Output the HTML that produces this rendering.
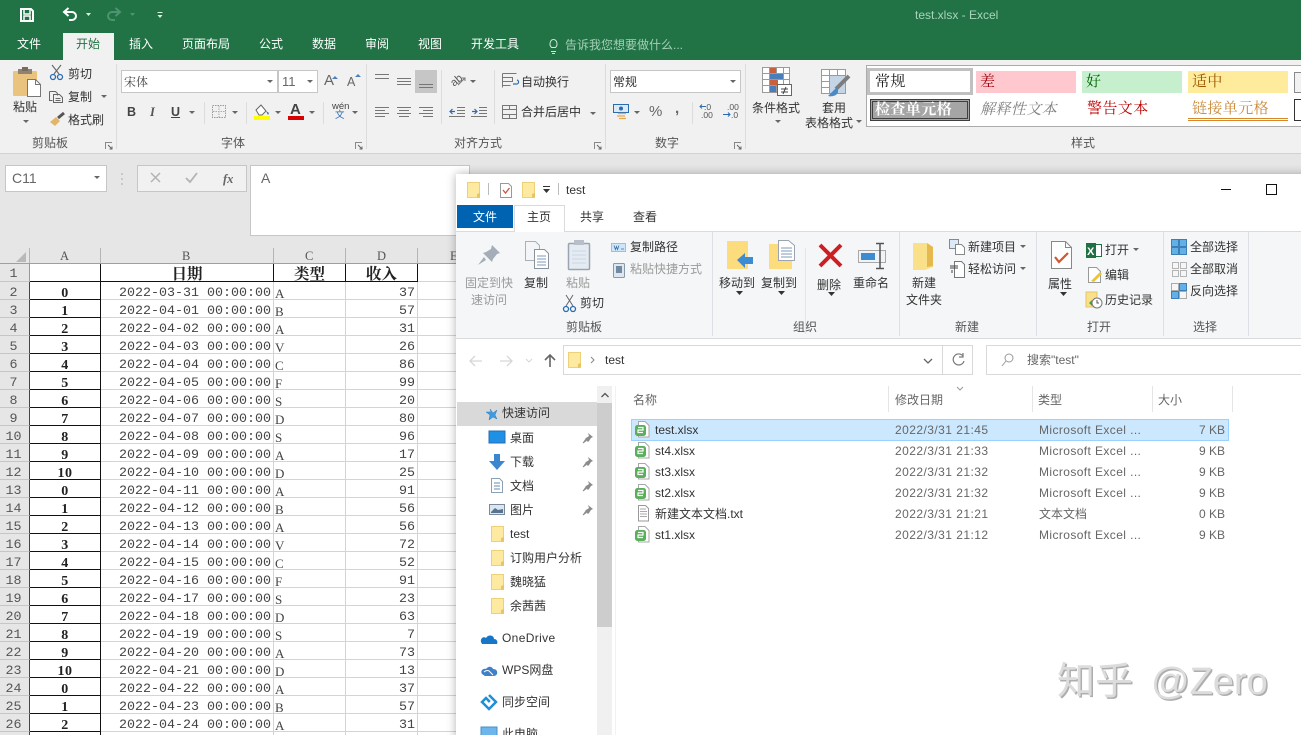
<!DOCTYPE html>
<html lang="zh-CN"><head><meta charset="utf-8"><title>test.xlsx - Excel</title>
<style>
html,body{margin:0;padding:0;width:1301px;height:735px;overflow:hidden}
body{position:relative;background:#e6e6e6;font-family:"Liberation Sans","Noto Sans CJK SC",sans-serif;font-size:12px;color:#444}
span{position:absolute;white-space:nowrap;line-height:16px}
div,main{position:absolute;box-sizing:border-box}
main{left:0;top:0;width:1301px;height:735px;overflow:hidden;background:#e6e6e6}
.w{color:#fff}.g{color:#555}.m{color:#9a9a9a}.d{color:#666}.k{color:#333}
.dt{letter-spacing:.45px}.ty{letter-spacing:.4px}
.st{font-family:"Liberation Serif","Noto Serif CJK SC",serif;font-size:15px;letter-spacing:.4px;line-height:20px}
table{position:absolute;left:0;top:264px;border-spacing:0;table-layout:fixed;width:470px;font:13.33px/10px "Liberation Mono","Noto Sans CJK SC",monospace;color:#444}
td{height:18px;padding:7px 0 0 0;box-sizing:border-box;border-right:1px solid #d4d4d4;border-bottom:1px solid #d4d4d4;background:#fff;white-space:nowrap;overflow:hidden}
td:nth-child(1){background:#e6e6e6;border-right:1px solid #444;border-bottom-color:#c6c6c6;text-align:center;padding-right:2px;color:#555}
td:nth-child(2){border-right-color:#111;border-bottom-color:#111;text-align:center;font:bold 14px/10px "Liberation Serif",serif;color:#222;letter-spacing:.5px}
td:nth-child(3){text-align:right;padding-right:2px}
td:nth-child(4){padding-left:1px;font-family:"Liberation Serif",serif;font-size:13px}
td:nth-child(5){text-align:right;padding-right:2px}
.h td{border-bottom-color:#111;border-right-color:#111;font:bold 15.5px/12px "Liberation Serif","Noto Serif CJK SC",serif;color:#222;text-align:center;padding:5px 0 0 0}
.h td:nth-child(1){font:13.33px/12px "Liberation Mono",monospace;border-bottom-color:#c6c6c6;border-right-color:#999;color:#555;padding-right:2px}
.h td:nth-child(6){border-color:#d4d4d4}
.ch{font:12.5px/14px "Liberation Serif",serif;color:#555}
</style></head><body><main>

<!-- Excel chrome -->
<div style="left:0;top:0;width:1301px;height:60px;background:#217346"></div>
<div style="left:63px;top:33px;width:51px;height:27px;background:#f1f1f1"></div>
<span class="w" style="left:17px;top:36px">文件</span>
<span style="left:76px;top:36px;color:#217346">开始</span>
<span class="w" style="left:129px;top:36px">插入</span>
<span class="w" style="left:182px;top:36px">页面布局</span>
<span class="w" style="left:259px;top:36px">公式</span>
<span class="w" style="left:312px;top:36px">数据</span>
<span class="w" style="left:365px;top:36px">审阅</span>
<span class="w" style="left:418px;top:36px">视图</span>
<span class="w" style="left:471px;top:36px">开发工具</span>
<span style="left:565px;top:37px;color:#a5cfb6">告诉我您想要做什么...</span>
<span style="left:915px;top:7px;color:#a9d4ba">test.xlsx - Excel</span>

<div style="left:0;top:60px;width:1301px;height:94px;background:#f1f1f1;border-bottom:1px solid #d2d2d2"></div>
<div style="left:121px;top:70px;width:157px;height:23px;background:#fff;border:1px solid #c6c6c6"></div>
<div style="left:278px;top:70px;width:40px;height:23px;background:#fff;border:1px solid #c6c6c6"></div>
<div style="left:610px;top:70px;width:131px;height:23px;background:#fff;border:1px solid #c6c6c6"></div>
<div style="left:415px;top:70px;width:22px;height:23px;background:#c6c6c6"></div>

<span style="left:124px;top:74px;font-family:'Noto Serif CJK SC',serif">宋体</span>
<span class="d" style="left:282px;top:74px;font-size:13px">11</span>
<span class="d" style="left:324px;top:73px;font-size:15px">A</span>
<span class="d" style="left:347px;top:74px;font-size:12.5px">A</span>
<span class="k" style="left:68px;top:66px">剪切</span>
<span class="k" style="left:68px;top:89px">复制</span>
<span class="k" style="left:68px;top:112px">格式刷</span>
<span class="k" style="left:13px;top:99px">粘贴</span>
<span class="g" style="left:32px;top:135px">剪贴板</span>
<span class="g" style="left:221px;top:135px">字体</span>
<span class="g" style="left:454px;top:135px">对齐方式</span>
<span class="g" style="left:655px;top:135px">数字</span>
<span class="g" style="left:1071px;top:135px">样式</span>
<span style="left:127px;top:104px;font-weight:bold;font-size:12.5px">B</span>
<span style="left:150px;top:104px;font:italic bold 12.5px/16px 'Liberation Serif',serif;color:#555">I</span>
<span style="left:171px;top:104px;font-weight:bold;font-size:12.5px;text-decoration:underline">U</span>
<span style="left:290px;top:102px;font-weight:bold;font-size:15px;line-height:15px">A</span>
<span style="left:332px;top:101px;font-size:9.5px;line-height:11px">wén</span>
<span style="left:335px;top:110px;font-size:9.5px;line-height:11px;color:#2b6cb0">文</span>
<span class="k" style="left:521px;top:74px">自动换行</span>
<span class="k" style="left:521px;top:104px">合并后居中</span>
<span class="k" style="left:613px;top:74px">常规</span>
<span class="d" style="left:649px;top:104px;font-size:15px">%</span>
<span class="d" style="left:675px;top:101px;font-size:15px;font-weight:bold">,</span>
<span class="k" style="left:752px;top:100px">条件格式</span>
<span class="k" style="left:822px;top:100px">套用</span>
<span class="k" style="left:805px;top:115px">表格格式</span>

<!-- style gallery -->
<div style="left:866px;top:65px;width:440px;height:62px;background:#fff;border:1px solid #ababab"></div>
<div style="left:867px;top:68px;width:106px;height:27px;background:#fff;border:3px solid #c0c0c0"></div>
<div style="left:976px;top:71px;width:100px;height:22px;background:#ffc7ce"></div>
<div style="left:1082px;top:71px;width:100px;height:22px;background:#c6efce"></div>
<div style="left:1188px;top:71px;width:100px;height:22px;background:#ffeb9c"></div>
<div style="left:1294px;top:72px;width:12px;height:21px;background:#f2f2f2;border:1px solid #8a8a8a"></div>
<div style="left:870px;top:99px;width:100px;height:22px;background:#a5a5a5;border:3px double #3f3f3f"></div>
<div style="left:1294px;top:99px;width:12px;height:22px;background:#fff;border:1px solid #333"></div>
<div style="left:1188px;top:118px;width:100px;height:3px;border-top:1px solid #d48a2c;border-bottom:1px solid #d48a2c"></div>
<span class="st" style="left:875px;top:72px;color:#111">常规</span>
<span class="st" style="left:980px;top:72px;color:#9c0006">差</span>
<span class="st" style="left:1086px;top:72px;color:#006100">好</span>
<span class="st" style="left:1192px;top:72px;color:#9c5700">适中</span>
<span class="st" style="left:875px;top:100px;color:#fff;font-weight:bold">检查单元格</span>
<span class="st" style="left:980px;top:100px;color:#7f7f7f;font-style:italic">解释性文本</span>
<span class="st" style="left:1087px;top:99px;color:#c00000">警告文本</span>
<span class="st" style="left:1192px;top:99px;color:#c98a3a">链接单元格</span>

<!-- formula bar -->
<div style="left:5px;top:165px;width:102px;height:27px;background:#fff;border:1px solid #c6c6c6"></div>
<span class="d" style="left:12px;top:170px;font-size:14px">C11</span>
<div style="left:137px;top:165px;width:110px;height:27px;background:#f1f1f1;border:1px solid #c6c6c6"></div>
<span style="left:223px;top:171px;font:italic bold 12.5px/16px 'Liberation Serif',serif;color:#666">fx</span>
<div style="left:250px;top:165px;width:220px;height:71px;background:#fff;border:1px solid #c6c6c6"></div>
<span class="d" style="left:261px;top:170px;font-size:14px">A</span>

<!-- sheet -->
<div style="left:0;top:263px;width:470px;height:1px;background:#9f9f9f"></div>
<div style="left:29px;top:248px;width:1px;height:15px;background:#b5b5b5"></div>
<div style="left:100px;top:248px;width:1px;height:15px;background:#b5b5b5"></div>
<div style="left:273px;top:248px;width:1px;height:15px;background:#b5b5b5"></div>
<div style="left:345px;top:248px;width:1px;height:15px;background:#b5b5b5"></div>
<div style="left:417px;top:248px;width:1px;height:15px;background:#b5b5b5"></div>
<span class="ch" style="left:60px;top:249px">A</span>
<span class="ch" style="left:182px;top:249px">B</span>
<span class="ch" style="left:305px;top:249px">C</span>
<span class="ch" style="left:377px;top:249px">D</span>
<span class="ch" style="left:450px;top:249px">E</span>
<table><colgroup><col style="width:30px"><col style="width:71px"><col style="width:173px"><col style="width:72px"><col style="width:72px"><col style="width:52px"></colgroup>
<tr class="h"><td>1</td><td></td><td>日期</td><td>类型</td><td>收入</td><td></td></tr>
<tr><td>2</td><td>0</td><td>2022-03-31 00:00:00</td><td>A</td><td>37</td><td></td></tr>
<tr><td>3</td><td>1</td><td>2022-04-01 00:00:00</td><td>B</td><td>57</td><td></td></tr>
<tr><td>4</td><td>2</td><td>2022-04-02 00:00:00</td><td>A</td><td>31</td><td></td></tr>
<tr><td>5</td><td>3</td><td>2022-04-03 00:00:00</td><td>V</td><td>26</td><td></td></tr>
<tr><td>6</td><td>4</td><td>2022-04-04 00:00:00</td><td>C</td><td>86</td><td></td></tr>
<tr><td>7</td><td>5</td><td>2022-04-05 00:00:00</td><td>F</td><td>99</td><td></td></tr>
<tr><td>8</td><td>6</td><td>2022-04-06 00:00:00</td><td>S</td><td>20</td><td></td></tr>
<tr><td>9</td><td>7</td><td>2022-04-07 00:00:00</td><td>D</td><td>80</td><td></td></tr>
<tr><td>10</td><td>8</td><td>2022-04-08 00:00:00</td><td>S</td><td>96</td><td></td></tr>
<tr><td>11</td><td>9</td><td>2022-04-09 00:00:00</td><td>A</td><td>17</td><td></td></tr>
<tr><td>12</td><td>10</td><td>2022-04-10 00:00:00</td><td>D</td><td>25</td><td></td></tr>
<tr><td>13</td><td>0</td><td>2022-04-11 00:00:00</td><td>A</td><td>91</td><td></td></tr>
<tr><td>14</td><td>1</td><td>2022-04-12 00:00:00</td><td>B</td><td>56</td><td></td></tr>
<tr><td>15</td><td>2</td><td>2022-04-13 00:00:00</td><td>A</td><td>56</td><td></td></tr>
<tr><td>16</td><td>3</td><td>2022-04-14 00:00:00</td><td>V</td><td>72</td><td></td></tr>
<tr><td>17</td><td>4</td><td>2022-04-15 00:00:00</td><td>C</td><td>52</td><td></td></tr>
<tr><td>18</td><td>5</td><td>2022-04-16 00:00:00</td><td>F</td><td>91</td><td></td></tr>
<tr><td>19</td><td>6</td><td>2022-04-17 00:00:00</td><td>S</td><td>23</td><td></td></tr>
<tr><td>20</td><td>7</td><td>2022-04-18 00:00:00</td><td>D</td><td>63</td><td></td></tr>
<tr><td>21</td><td>8</td><td>2022-04-19 00:00:00</td><td>S</td><td>7</td><td></td></tr>
<tr><td>22</td><td>9</td><td>2022-04-20 00:00:00</td><td>A</td><td>73</td><td></td></tr>
<tr><td>23</td><td>10</td><td>2022-04-21 00:00:00</td><td>D</td><td>13</td><td></td></tr>
<tr><td>24</td><td>0</td><td>2022-04-22 00:00:00</td><td>A</td><td>37</td><td></td></tr>
<tr><td>25</td><td>1</td><td>2022-04-23 00:00:00</td><td>B</td><td>57</td><td></td></tr>
<tr><td>26</td><td>2</td><td>2022-04-24 00:00:00</td><td>A</td><td>31</td><td></td></tr>
<tr><td></td><td></td><td></td><td></td><td></td><td></td></tr>
</table>

<!-- Explorer window -->
<div style="left:456px;top:174px;width:860px;height:580px;background:#fff;box-shadow:0 0 9px rgba(0,0,0,.3)"></div>
<div style="left:456px;top:231px;width:845px;height:108px;background:#f5f6f7;border-top:1px solid #dadbdc;border-bottom:1px solid #dadbdc"></div>
<div style="left:457px;top:205px;width:56px;height:23px;background:#0063b1"></div>
<div style="left:514px;top:205px;width:51px;height:27px;background:#fff;border:1px solid #dadbdc;border-bottom:0"></div>
<span class="k" style="left:566px;top:182px">test</span>
<span class="w" style="left:473px;top:209px">文件</span>
<span class="k" style="left:527px;top:209px">主页</span>
<span class="k" style="left:580px;top:209px">共享</span>
<span class="k" style="left:633px;top:209px">查看</span>

<!-- address -->
<div style="left:563px;top:345px;width:410px;height:30px;border:1px solid #d9d9d9;background:#fff"></div>
<div style="left:942px;top:345px;width:1px;height:30px;background:#d9d9d9"></div>
<div style="left:986px;top:345px;width:330px;height:30px;border:1px solid #d9d9d9;background:#fff"></div>
<span class="k" style="left:605px;top:352px">test</span>
<span class="d" style="left:1027px;top:352px">搜索"test"</span>

<!-- nav pane & list backgrounds -->
<div style="left:457px;top:402px;width:140px;height:24px;background:#d9d9d9"></div>
<div style="left:597px;top:386px;width:15px;height:349px;background:#f0f0f0"></div>
<div style="left:597px;top:403px;width:15px;height:224px;background:#cdcdcd"></div>
<div style="left:615px;top:386px;width:1px;height:349px;background:#f2f2f2"></div>
<div style="left:888px;top:386px;width:1px;height:26px;background:#e5e5e5"></div>
<div style="left:1032px;top:386px;width:1px;height:26px;background:#e5e5e5"></div>
<div style="left:1152px;top:386px;width:1px;height:26px;background:#e5e5e5"></div>
<div style="left:1232px;top:386px;width:1px;height:26px;background:#e5e5e5"></div>
<div style="left:631px;top:419px;width:598px;height:22px;background:#cce8ff;border:1px solid #99d1ff"></div>

<!-- text group shifted by 1px -->
<div style="left:0;top:1px;width:1301px;height:1px">
<span class="m" style="left:465px;top:274px">固定到快</span>
<span class="m" style="left:471px;top:291px">速访问</span>
<span class="k" style="left:524px;top:274px">复制</span>
<span class="m" style="left:566px;top:274px">粘贴</span>
<span class="k" style="left:630px;top:238px">复制路径</span>
<span class="m" style="left:630px;top:260px">粘贴快捷方式</span>
<span class="k" style="left:580px;top:294px">剪切</span>
<span class="g" style="left:566px;top:318px">剪贴板</span>
<span class="k" style="left:719px;top:274px">移动到</span>
<span class="k" style="left:761px;top:274px">复制到</span>
<span class="k" style="left:817px;top:276px">删除</span>
<span class="k" style="left:853px;top:274px">重命名</span>
<span class="g" style="left:793px;top:318px">组织</span>
<span class="k" style="left:912px;top:274px">新建</span>
<span class="k" style="left:906px;top:291px">文件夹</span>
<span class="k" style="left:968px;top:238px">新建项目</span>
<span class="k" style="left:968px;top:260px">轻松访问</span>
<span class="g" style="left:955px;top:318px">新建</span>
<span class="k" style="left:1048px;top:275px">属性</span>
<span class="k" style="left:1105px;top:241px">打开</span>
<span class="k" style="left:1105px;top:266px">编辑</span>
<span class="k" style="left:1105px;top:291px">历史记录</span>
<span class="g" style="left:1087px;top:318px">打开</span>
<span class="k" style="left:1190px;top:238px">全部选择</span>
<span class="k" style="left:1190px;top:260px">全部取消</span>
<span class="k" style="left:1190px;top:282px">反向选择</span>
<span class="g" style="left:1193px;top:318px">选择</span>

<span class="k" style="left:502px;top:404px">快速访问</span>
<span class="k" style="left:510px;top:429px">桌面</span>
<span class="k" style="left:510px;top:453px">下载</span>
<span class="k" style="left:510px;top:477px">文档</span>
<span class="k" style="left:510px;top:501px">图片</span>
<span class="k" style="left:510px;top:525px">test</span>
<span class="k" style="left:510px;top:549px">订购用户分析</span>
<span class="k" style="left:510px;top:573px">魏晓猛</span>
<span class="k" style="left:510px;top:597px">余茜茜</span>
<span class="k" style="left:502px;top:629px;letter-spacing:.35px">OneDrive</span>
<span class="k" style="left:502px;top:661px">WPS网盘</span>
<span class="k" style="left:502px;top:693px">同步空间</span>
<span class="k" style="left:502px;top:725px">此电脑</span>

<span class="d" style="left:633px;top:391px">名称</span>
<span class="d" style="left:895px;top:391px">修改日期</span>
<span class="d" style="left:1038px;top:391px">类型</span>
<span class="d" style="left:1158px;top:391px">大小</span>

<span class="k" style="left:655px;top:421px">test.xlsx</span><span class="d dt" style="left:895px;top:421px">2022/3/31 21:45</span><span class="d ty" style="left:1039px;top:421px">Microsoft Excel ...</span><span class="d" style="right:76px;top:421px">7 KB</span>
<span class="k" style="left:655px;top:442px">st4.xlsx</span><span class="d dt" style="left:895px;top:442px">2022/3/31 21:33</span><span class="d ty" style="left:1039px;top:442px">Microsoft Excel ...</span><span class="d" style="right:76px;top:442px">9 KB</span>
<span class="k" style="left:655px;top:463px">st3.xlsx</span><span class="d dt" style="left:895px;top:463px">2022/3/31 21:32</span><span class="d ty" style="left:1039px;top:463px">Microsoft Excel ...</span><span class="d" style="right:76px;top:463px">9 KB</span>
<span class="k" style="left:655px;top:484px">st2.xlsx</span><span class="d dt" style="left:895px;top:484px">2022/3/31 21:32</span><span class="d ty" style="left:1039px;top:484px">Microsoft Excel ...</span><span class="d" style="right:76px;top:484px">9 KB</span>
<span class="k" style="left:655px;top:505px">新建文本文档.txt</span><span class="d dt" style="left:895px;top:505px">2022/3/31 21:21</span><span class="d" style="left:1039px;top:505px">文本文档</span><span class="d" style="right:76px;top:505px">0 KB</span>
<span class="k" style="left:655px;top:526px">st1.xlsx</span><span class="d dt" style="left:895px;top:526px">2022/3/31 21:12</span><span class="d ty" style="left:1039px;top:526px">Microsoft Excel ...</span><span class="d" style="right:76px;top:526px">9 KB</span>
</div>

<!-- icons -->
<svg width="1301" height="735" viewBox="0 0 1301 735" style="position:absolute;left:0;top:0" fill="none">
<defs>
<path id="c" d="M0 0h6l-3 3z" fill="#666"/>
<path id="cw" d="M0 0h5l-2.500 3z" fill="#dfeee5"/>
<path id="cb" d="M0 0h7l-3.500 4z" fill="#333"/>
<g id="la" stroke="#888"><path d="M.5 7V.5H7"/><path d="M3 3l4 4M7 4.500V7H4.500" stroke="#666"/></g>
<g id="fo"><rect x=".5" y=".5" width="12" height="15" fill="#fde9a0" stroke="#ecd07a"/><path d="M10 16V12l3-1v4z" fill="#e9c55f"/></g>
<g id="xl"><path d="M3.500.5h6.500l4 4v11.500h-10.500z" fill="#fff" stroke="#a8a8a8"/><rect y="4" width="11" height="11" rx="2.500" fill="#5bae5b"/><path d="M3 6.500h5v2.500h-5v2.500h5" stroke="#fff" stroke-width="1.200"/></g>
<g id="pn" fill="#8c8c8c"><path d="M5 0l5 4-2 1-2 3-1 1-3-3 1-1 3-2z"/><path d="M2.500 6.500l-2.500 3.500 3.500-2.500" stroke="#8c8c8c" stroke-width=".8"/></g>
</defs>

<!-- QAT -->
<g stroke="#fff" stroke-width="2"><path d="M21 9h10l2 2v10H21z"/><path d="M24 9v5h6V9M24 21v-5h6v5" stroke-width="1.500"/></g>
<path d="M65 12h7a4 4 0 0 1 0 8h-3M68.500 8l-4.500 4 4.500 4" stroke="#fff" stroke-width="2"/>
<use href="#cw" x="86" y="13"/>
<path d="M119 12h-7a4 4 0 0 0 0 8h3M115.500 8l4.500 4-4.500 4" stroke="#4d9470" stroke-width="2"/>
<path d="M130 13h5l-2.500 3z" fill="#4d9470"/>
<path d="M157.500 12.500h5" stroke="#dfeee5"/><use href="#cw" x="157.500" y="15"/>
<g stroke="#cfe6d8"><path d="M551 51.500h5M552 53.500h3M551.500 47.500c-3-3-1-8 2-8s5 5 2 8z"/></g>

<!-- clipboard -->
<rect x="13" y="71" width="24" height="25" rx="1" fill="#eac47f"/>
<rect x="18" y="69" width="14" height="5" fill="#8d8273"/><rect x="22" y="67" width="6" height="4" fill="#7a6b5c"/>
<path d="M27.500 79.500h8l5 5v12h-13z" fill="#fff" stroke="#777"/><path d="M35.500 79.500v5h5" stroke="#777"/>
<use href="#c" x="23" y="120"/>
<g stroke="#666" stroke-width="1.100"><path d="M54 74l7-9M59 74l-7-9"/></g>
<g stroke="#2b6cb0" stroke-width="1.300"><circle cx="53" cy="77" r="2.500"/><circle cx="60" cy="77" r="2.500"/></g>
<g stroke="#666"><path d="M49.500 91.500h6l2 2v2M49.500 91.500v9h3"/><path d="M53.500 94.500h6l3 3v5h-9zM55.500 98.500h5M55.500 100.500h5"/></g>
<use href="#c" x="101" y="95"/>
<path d="M50 122l6-5 4 4-5 5z" fill="#e3b56b"/><path d="M58 118l6-5" stroke="#555" stroke-width="3"/>
<use href="#la" x="105" y="142"/><use href="#la" x="355" y="142"/><use href="#la" x="594" y="142"/><use href="#la" x="734" y="142"/>

<!-- ribbon separators -->
<g stroke="#dcdcdc"><path d="M116.500 64v85M366.500 64v85M605.500 64v85M745.500 64v85"/><path d="M204.500 102v22M246.500 102v22M323.500 102v22M441.500 70v54M494.500 70v54M692.500 102v22"/></g>
<use href="#c" x="267" y="80"/><use href="#c" x="307" y="80"/><use href="#c" x="730" y="80"/><use href="#c" x="94" y="176"/>
<path d="M335 76l3 3h-6zM358 74l3 3h-6z" fill="#4f7fb8"/>
<use href="#c" x="189" y="111"/><use href="#c" x="232" y="111"/><use href="#c" x="275" y="111"/><use href="#c" x="309" y="111"/><use href="#c" x="352" y="111"/>
<rect x="212.500" y="105.500" width="13" height="12" stroke="#999" stroke-dasharray="1.500 1"/><path d="M219 106v12M213 111.500h12" stroke="#aaa" stroke-dasharray="1.500 1"/>
<path d="M256 110l5-5 5 6-4 4h-3z" stroke="#666" fill="#fff"/><path d="M266 111l3 2-1 2z" fill="#2b6cb0"/>
<rect x="254" y="116" width="16" height="4" fill="#ffff00"/>
<rect x="288" y="116" width="16" height="4" fill="#d80000"/>

<!-- alignment -->
<g stroke="#777"><path d="M375 74.500h14M375 78.500h14M397 78.500h14M397 81.500h14M397 84.500h14M419 84.500h14M419 87.500h14"/>
<path d="M375 107.500h14M375 110.500h10M375 113.500h14M375 116.500h10M397 107.500h14M399 110.500h10M397 113.500h14M399 116.500h10M419 107.500h14M423 110.500h10M419 113.500h14M423 116.500h10"/>
<path d="M457 107.500h8M457 110.500h8M457 113.500h8M457 116.500h8M449 116.500h8M479 107.500h8M479 110.500h8M479 113.500h8M479 116.500h8M471 116.500h8"/></g>
<path d="M455 111.500h-5M452.500 109l-2.500 2.500 2.500 2.500M472 111.500h5M474.500 109l2.500 2.500-2.500 2.500" stroke="#2b6cb0" stroke-width="1.200"/>
<text x="450" y="84" font-size="11" fill="#555" transform="rotate(-40 456 80)" font-family="Liberation Sans">ab</text><path d="M458 85l7-7M462 78h3v3" stroke="#777"/>
<use href="#c" x="470" y="80"/>
<g stroke="#777"><path d="M502.500 73.500h14M502.500 77.500h10v4h-10zM502.500 85.500h8M502.500 73.500v14"/><rect x="502.500" y="105.500" width="14" height="13"/><path d="M502.500 109.500h14M502.500 114.500h14M509.500 105.500v4M509.500 114.500v4"/></g>
<path d="M513 84h3a2 2 0 0 0 1-4" stroke="#2b6cb0" stroke-width="1.200"/>
<use href="#c" x="590" y="112"/>
<!-- number -->
<rect x="613.500" y="104.500" width="15" height="8" fill="#dce9f6" stroke="#2b6cb0"/><circle cx="621" cy="108.500" r="2" fill="#2b6cb0"/>
<path d="M618 113.500h8M617 116h8M619 118.500h7" stroke="#e6a84a" stroke-width="1.300"/>
<use href="#c" x="634" y="111"/>
<g font-family="Liberation Sans" font-size="8.500" fill="#555"><text x="704" y="110">.0</text><text x="701" y="118">.00</text><text x="727" y="110">.00</text><text x="731" y="118">.0</text></g>
<path d="M706 106.500h-6M702 104.500l-2 2 2 2M723 114.500h7M728 112.500l2 2-2 2" stroke="#2b6cb0"/>
<!-- cond format -->
<g stroke="#9a9a9a"><rect x="762.500" y="67.500" width="27" height="25" fill="#fff"/><path d="M769.500 67v26M776.500 67v26M783.500 67v26M762 73.500h28M762 79.500h28M762 85.500h28"/></g>
<rect x="770" y="68" width="6" height="5" fill="#c8603e"/><rect x="770" y="74" width="13" height="5" fill="#4a7ebb"/><rect x="770" y="80" width="8" height="5" fill="#c8603e"/><rect x="770" y="86" width="6" height="6" fill="#4a7ebb"/>
<rect x="777.500" y="84.500" width="14" height="11" fill="#fff" stroke="#666"/><path d="M781 89h7M781 92h7M786 87l-3 7" stroke="#444"/>
<use href="#c" x="775" y="120"/>
<g stroke="#9a9a9a"><rect x="821.500" y="69.500" width="24" height="24" fill="#fff"/><path d="M829.500 69v25M837.500 69v25M821 75.500h25M821 81.500h25M821 87.500h25"/></g>
<rect x="830" y="76" width="15" height="17" fill="#c5d5e6"/>
<path d="M849 76l-13 13" stroke="#7d7d7d" stroke-width="4"/><path d="M838 86l-7 7-3 3c3 1 9 0 10-4z" fill="#4a8bc6"/>
<use href="#c" x="856" y="120"/>
<!-- formula bar -->
<path d="M122 173v2M122 178v2M122 183v2" stroke="#aaa"/>
<path d="M151 173l9 9M160 173l-9 9" stroke="#b3b3b3" stroke-width="1.500"/>
<path d="M186 178l4 4 7-9" stroke="#b3b3b3" stroke-width="1.800"/>
<path d="M16 262l10-10v10z" fill="#b9b9b9"/>

<!-- explorer title bar -->
<use href="#fo" x="467" y="182"/><use href="#fo" x="522" y="182"/>
<path d="M488.500 183v12M558.500 183v12" stroke="#bbb"/>
<path d="M500.500 183.500h8l3 3v11h-11z" fill="#fff" stroke="#999"/><path d="M503 190l2.500 3 4-5" stroke="#d24a2f" stroke-width="1.200"/>
<path d="M543 186.500h7" stroke="#333"/><use href="#cb" x="543" y="189"/>
<path d="M1221 189.500h10" stroke="#111"/><rect x="1266.500" y="184.500" width="10" height="10" stroke="#111"/>

<!-- explorer ribbon icons -->
<g fill="#a5adb8"><path d="M492 245l8 8-3 1-4 5-1 3-9-9 3-1 5-3z"/><path d="M484 257l-6 8 8-5z"/></g>
<path d="M525.500 241.500h10l4 4v15h-14z" fill="#f3f5f8" stroke="#a9b0b8"/><path d="M534.500 249.500h10l4 4v15h-14z" fill="#fff" stroke="#8a929c"/><path d="M537 256h9M537 259h9M537 262h9M537 265h9" stroke="#7c99bb"/>
<rect x="568.500" y="243.500" width="21" height="26" rx="1" fill="#e4ebf3" stroke="#9aa5b1" stroke-width="1.500"/><rect x="574" y="240" width="10" height="5" fill="#b8bfc8"/><path d="M572 251h14M572 255h14M572 259h14M572 263h14" stroke="#cdd6e0"/>
<rect x="611.500" y="243.500" width="14" height="8" fill="#cfe6fa" stroke="#9bbfe0"/><path d="M614 245.500l1.500 4 1-3 1 3 1.500-4M621 249h3" stroke="#3b6ea5" stroke-width=".8"/>
<rect x="613.500" y="263.500" width="11" height="14" rx="1" fill="#dfe6ee" stroke="#8a99a8"/><rect x="616" y="266" width="6" height="7" fill="#6f8aa5"/>
<g stroke="#666"><path d="M566 306l7-11M573 306l-7-11"/></g><g stroke="#2b6cb0" stroke-width="1.300"><circle cx="566" cy="309" r="2.500"/><circle cx="573" cy="309" r="2.500"/></g>
<path d="M712.500 232v104M899.500 232v104M1036.500 232v104M1163.500 232v104M1248.500 232v104" stroke="#dcdfe3"/><path d="M805.500 248v86" stroke="#e3e5e8"/>

<rect x="727" y="241" width="21" height="28" fill="#fcdc7c"/><path d="M737 262l8-7v4h8v7h-8v4z" fill="#3d8bd0" transform="translate(0 -2)"/>
<rect x="769" y="244" width="23" height="25" fill="#fcdc7c"/><path d="M778.500 240.500h10l6 5v15h-16z" fill="#fff" stroke="#9aa5b1"/><path d="M781 248h11M781 251h11M781 254h11M781 257h11" stroke="#7c99bb"/>
<use href="#cb" x="736" y="291"/><use href="#cb" x="778" y="291"/><use href="#cb" x="828" y="292"/>
<path d="M820 245l21 21M841 245l-21 21" stroke="#cc1f24" stroke-width="4"/>
<rect x="858.500" y="250.500" width="27" height="12" fill="#f0f3f7" stroke="#a8a8a8"/><rect x="861" y="253" width="14" height="7" fill="#3d8bd0"/><path d="M880 244v24M876 243.500h8M876 268.500h8" stroke="#555" stroke-width="1.500"/>

<path d="M913 243h14l6 4v20l-8 3h-12z" fill="#fbe08a"/><path d="M927 243v24l6-1V247z" fill="#e6b94e"/>
<path d="M949.500 239.500h9v9h-9z" fill="#dceaf7" stroke="#888"/><path d="M955.500 244.500h6l3 3v7h-9z" fill="#fff" stroke="#888"/>
<path d="M954.500 261.500h7l3 3v13h-10z" fill="#fff" stroke="#777"/><path d="M950 266h8M950 268h8M952 270v3" stroke="#444"/>
<use href="#c" x="1020" y="245"/><use href="#c" x="1020" y="267"/>
<path d="M1051.500 241.500h14l6 6v21h-20z" fill="#fff" stroke="#888"/><path d="M1065.500 241.500v6h6" stroke="#888"/><path d="M1055 257l4 5 9-9" stroke="#d2562f" stroke-width="2.200"/>
<use href="#cb" x="1060" y="292"/>
<rect x="1086" y="243" width="10" height="15" fill="#1f7144"/><rect x="1095.500" y="244.500" width="6" height="12" fill="#fff" stroke="#1f7144"/><text x="1087" y="255" font-size="11" font-weight="bold" fill="#fff" font-family="Liberation Sans">X</text>
<use href="#c" x="1133" y="248"/>
<path d="M1088.500 267.500h8l4 4v11h-12z" fill="#fff" stroke="#999"/><path d="M1091 281l9-9 2 2-8 8z" fill="#e8c53c"/>
<rect x="1086" y="292" width="11" height="15" fill="#fbe08a" stroke="#e3c56a"/><circle cx="1097" cy="303" r="5" fill="#fff" stroke="#777"/><path d="M1097 300v3h2" stroke="#555"/><path d="M1089 303l3-3v6z" fill="#3ea043"/>
<g fill="#62b0e8" stroke="#3f7fb5"><rect x="1171.500" y="239.500" width="7" height="7"/><rect x="1179.500" y="239.500" width="7" height="7"/><rect x="1171.500" y="247.500" width="7" height="7"/><rect x="1179.500" y="247.500" width="7" height="7"/></g>
<g stroke="#b5b5b5"><rect x="1172.500" y="262.500" width="6" height="6"/><rect x="1180.500" y="262.500" width="6" height="6"/><rect x="1172.500" y="270.500" width="6" height="6"/><rect x="1180.500" y="270.500" width="6" height="6"/></g>
<g stroke="#3f7fb5"><rect x="1171.500" y="283.500" width="7" height="7" stroke="#aaa"/><rect x="1179.500" y="283.500" width="7" height="7" fill="#62b0e8"/><rect x="1171.500" y="291.500" width="7" height="7" fill="#62b0e8"/><rect x="1179.500" y="291.500" width="7" height="7" stroke="#aaa"/></g>

<!-- nav bar -->
<path d="M470 361h12M475 356l-5 5 5 5M500 361h12M507 356l5 5-5 5" stroke="#d6d6d6" stroke-width="1.300"/>
<path d="M526 359l3 3 3-3" stroke="#d6d6d6"/>
<path d="M550 367v-12M545 360l5-5 5 5" stroke="#666" stroke-width="1.600"/>
<use href="#fo" x="568" y="352"/>
<path d="M591 357l3 3-3 3" stroke="#888"/>
<path d="M924 359l4 4 4-4" stroke="#666" stroke-width="1.300"/>
<path d="M963 356a5.500 5.500 0 1 0 1 5M963 353v4h-4" stroke="#777" stroke-width="1.200"/>
<circle cx="1009" cy="358" r="4" stroke="#999"/><path d="M1006 361l-4 5" stroke="#999"/>
<path d="M957 387l3 3 3-3" stroke="#999"/>
<path d="M601.500 397l3.500-3.500 3.500 3.500" stroke="#555" stroke-width="1.300"/>

<!-- nav icons -->
<path d="M490 409l3 4 4-3-2 5 2 4-4-2-4 3 1-5-4-3 5 0z" fill="#3d9be0" stroke="#2f7ebd" stroke-width=".5"/>
<rect x="489" y="431" width="16" height="12" fill="#1e90e6" stroke="#2b6cb0"/>
<path d="M494 454h6v7h5l-8 9-8-9h5z" fill="#3c86cf"/>
<path d="M491.500 478.500h8l3 3v11h-11z" fill="#fff" stroke="#8aa0b5"/><path d="M494 483h6M494 486h6M494 489h6" stroke="#5f8bb5"/>
<rect x="489.500" y="504.500" width="15" height="10" fill="#dbe6f0" stroke="#7a8a9a"/><path d="M491 512l4-4 3 2 5-1v4h-12z" fill="#56738f"/>
<use href="#pn" x="583" y="433"/><use href="#pn" x="583" y="457"/><use href="#pn" x="583" y="481"/><use href="#pn" x="583" y="505"/>
<use href="#fo" x="491" y="526"/><use href="#fo" x="491" y="550"/><use href="#fo" x="491" y="574"/><use href="#fo" x="491" y="598"/>
<path d="M481 642c-1-4 3-6 5-4 2-4 8-3 8 1 3 0 4 3 3 5h-15z" fill="#1677c9"/>
<path d="M482 674c-2-3 1-6 4-5 2-3 6-3 7 0 3 0 5 2 4 5-1 2-3 2-4 2h-8z" fill="#3f80c8"/><path d="M484 672c2-2 5-2 6 0l3 3" stroke="#fff"/>
<path d="M489 695l7 7-7 7-7-7 4-4 3 3-1 1" stroke="#1f8fd6" stroke-width="2.500"/>
<rect x="481" y="727" width="16" height="12" fill="#6db6ec" stroke="#4a8fc4"/>

<!-- file icons -->
<use href="#xl" x="635" y="421"/><use href="#xl" x="635" y="442"/><use href="#xl" x="635" y="463"/><use href="#xl" x="635" y="484"/><use href="#xl" x="635" y="526"/>
<path d="M638.500 505.500h7l3 3v12.500h-10z" fill="#fff" stroke="#999"/><path d="M640 509h6M640 511.500h7M640 514h7M640 516.500h7" stroke="#aaa"/>
</svg>

<span style="left:1057px;top:659px;font-size:38px;line-height:46px;color:#dcdcdc;text-shadow:1.500px 1.500px 0 #aeaeae">知乎</span>
<span style="left:1151px;top:659px;font-size:38px;line-height:46px;color:#dcdcdc;text-shadow:1.500px 1.500px 0 #aeaeae">@Zero</span>
</main></body></html>
